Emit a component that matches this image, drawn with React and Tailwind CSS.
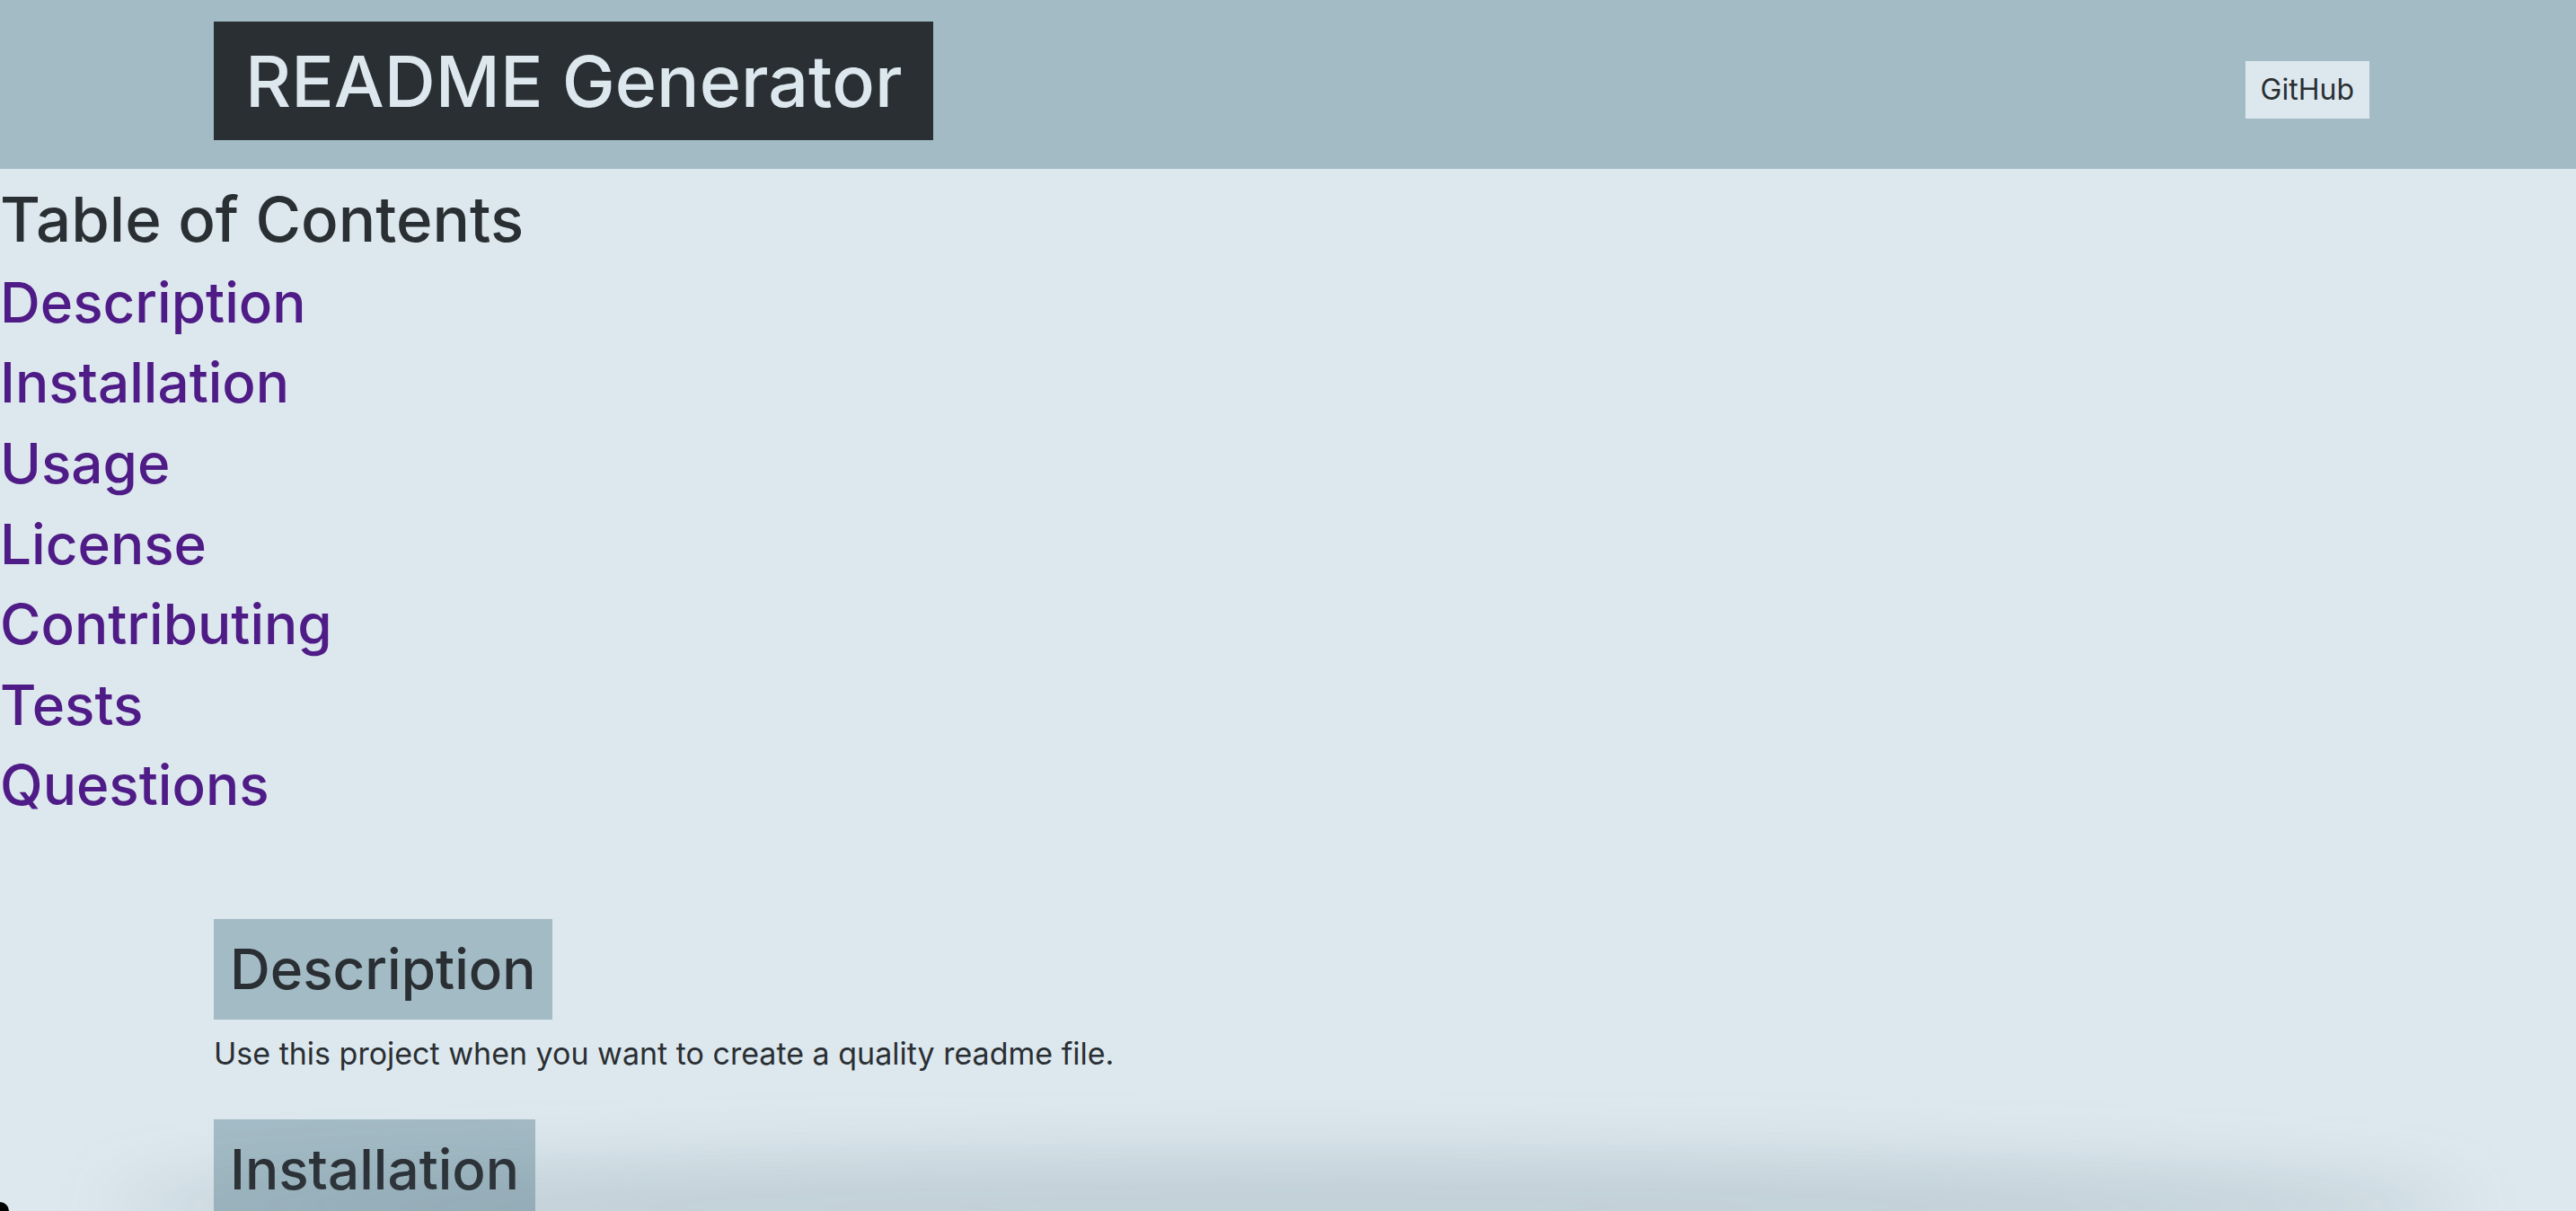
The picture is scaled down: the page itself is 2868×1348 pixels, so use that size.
const links = [
  "Description",
  "Installation",
  "Usage",
  "License",
  "Contributing",
  "Tests",
  "Questions",
];

const Header = () => {
  return (
    <header className="h-[188px] bg-[#a3bbc5] flex items-start justify-between pl-[238px] pr-[230px]">
      <div className="mt-[24px] h-[132px] bg-[#2a2f33] px-[35px] flex items-center">
        <h1 className="text-[79px] font-medium leading-none text-[#dde8ee]">README Generator</h1>
      </div>
      <a
        href="#"
        className="mt-[68px] h-[64px] px-[17px] bg-[#dde8ee] text-[#2a2f33] text-[32px] flex items-center"
      >
        GitHub
      </a>
    </header>
  );
};

const Section = ({ title, children }) => {
  return (
    <section className="mb-[48px]">
      <h2 className="inline-flex items-center h-[112px] px-[18px] bg-[#a3bbc5] text-[62px] font-medium leading-none text-[#2a2f33]">
        {title}
      </h2>
      <p className="mt-[12px] text-[34px] text-[#2a2f33]">{children}</p>
    </section>
  );
};

export default function App() {
  return (
    <div
      className="relative h-screen overflow-hidden bg-[#dde8ee] text-[#2a2f33]"
      style={{ fontFamily: "Inter, 'Noto Sans', sans-serif" }}
    >
      <Header />

      <main>
        <div className="pt-[15px]">
          <h2 className="text-[69px] font-medium leading-[1.2] text-[#2a2f33]">Table of Contents</h2>
          <ul className="mt-[6px]">
            {links.map((link) => (
              <li key={link}>
                <a
                  href={"#" + link.toLowerCase()}
                  className="text-[62px] font-medium leading-[89.6px] text-[#4f1b86]"
                >
                  {link}
                </a>
              </li>
            ))}
          </ul>
        </div>

        <div className="pl-[238px] pt-[104px]">
          <Section title="Description">
            Use this project when you want to create a quality readme file.
          </Section>
          <Section title="Installation">
            Run npm install to install the dependencies.
          </Section>
        </div>
      </main>

      {/* shadow cast on the bottom edge */}
      <div className="pointer-events-none absolute left-[120px] right-[120px] bottom-[-50px] h-[110px] rounded-[50%] bg-[#4d6572]/20 blur-[36px]" />
      <div className="pointer-events-none absolute left-0 bottom-0 w-[10px] h-[10px] bg-black rounded-tr-[10px]" />
    </div>
  );
}
